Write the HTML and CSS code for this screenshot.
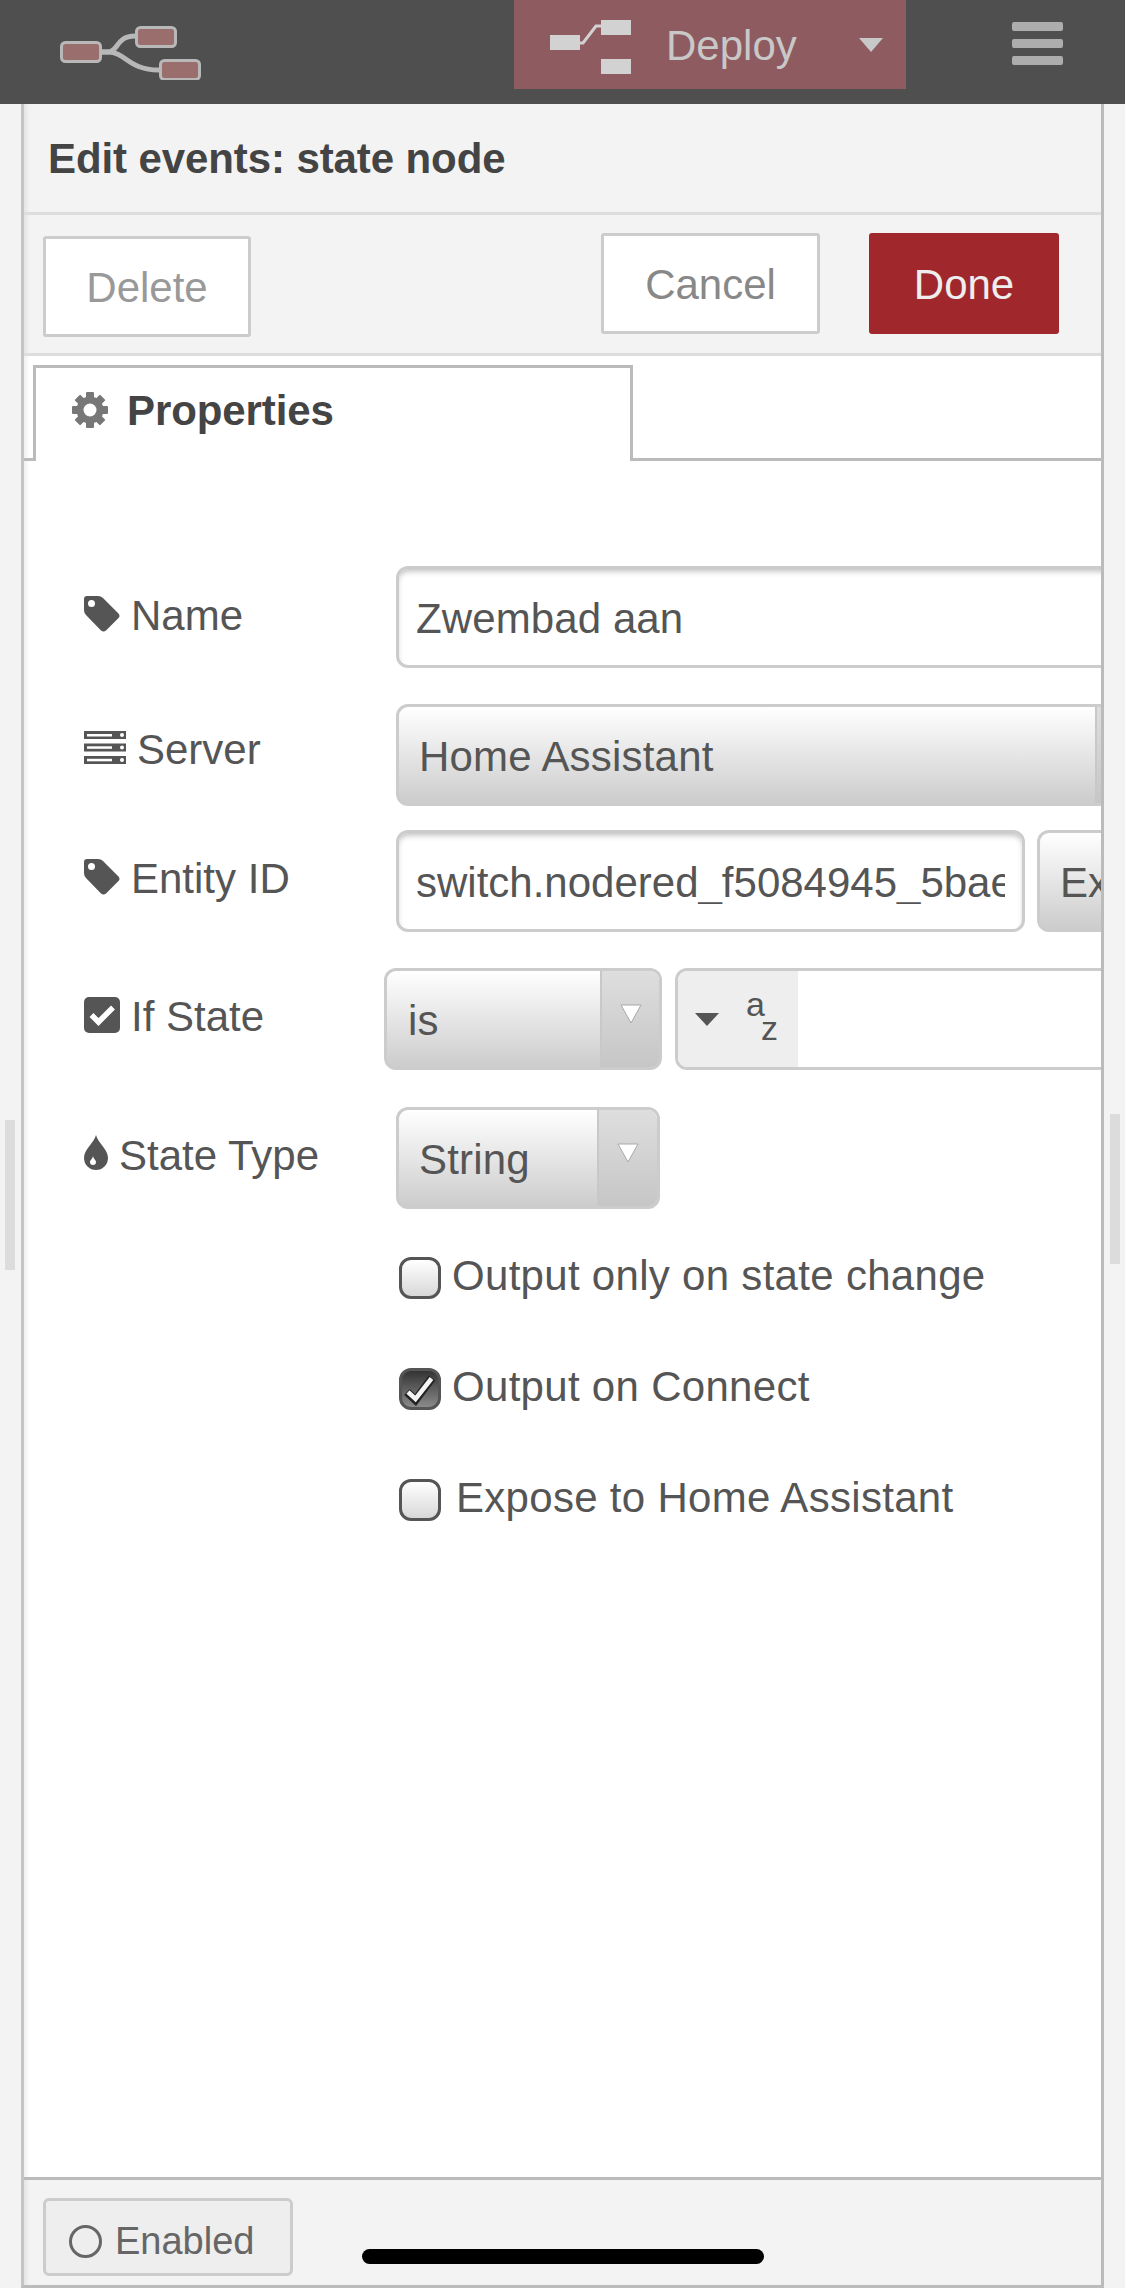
FILE: index.html
```html
<!DOCTYPE html>
<html lang="en">
<head>
    <meta charset="UTF-8">
    <meta name="viewport" content="width=device-width, initial-scale=1.0">
    <title>Edit events: state node</title>
    <link rel="stylesheet" href="styles.css">
</head>
<body>
    <header class="topbar">
        <svg class="logo" width="141" height="54" viewBox="0 0 141 54">
            <path d="M42 26 H48 C58 26 56 10 75 10" fill="none" stroke="#b8b8b8" stroke-width="5"/>
            <path d="M42 26 H48 C66 26 68 44 99 44" fill="none" stroke="#b8b8b8" stroke-width="5"/>
            <rect x="1.5" y="16.5" width="39" height="19" rx="4" fill="#9b6e6e" stroke="#b8b8b8" stroke-width="3"/>
            <rect x="76.5" y="1.5" width="39" height="19" rx="4" fill="#9b6e6e" stroke="#b8b8b8" stroke-width="3"/>
            <rect x="100.5" y="34.5" width="39" height="19" rx="4" fill="#9b6e6e" stroke="#b8b8b8" stroke-width="3"/>
        </svg>
        <div class="deploy">
            <svg class="deploy-icon" width="81" height="54" viewBox="0 0 81 54">
                <rect x="0" y="15" width="30" height="15" fill="#d2d2d2"/>
                <rect x="51" y="0" width="30" height="15" fill="#d2d2d2"/>
                <rect x="51" y="39" width="30" height="15" fill="#d2d2d2"/>
                <path d="M30 23 H33 L46 6 H51" fill="none" stroke="#d2d2d2" stroke-width="3"/>
            </svg>
            <span class="deploy-label">Deploy</span>
            <svg class="deploy-caret" width="24" height="14" viewBox="0 0 24 14">
                <path d="M0 0 H24 L12 14 Z" fill="#c8c8c8"/>
            </svg>
        </div>
        <div class="menu">
            <span></span>
            <span></span>
            <span></span>
        </div>
    </header>

    <div class="handle handle-left"></div>
    <div class="handle handle-right"></div>

    <main class="tray">
        <div class="tray-title">Edit events: state node</div>

        <div class="toolbar">
            <div class="btn btn-delete">Delete</div>
            <div class="btn btn-cancel">Cancel</div>
            <div class="btn btn-done">Done</div>
        </div>

        <div class="tabs">
            <div class="tab">
                <svg width="36" height="36" viewBox="0 0 36 36">
                    <g fill="#777">
                        <rect x="14" y="0" width="8" height="36" rx="1"/>
                        <rect x="14" y="0" width="8" height="36" rx="1" transform="rotate(45 18 18)"/>
                        <rect x="14" y="0" width="8" height="36" rx="1" transform="rotate(90 18 18)"/>
                        <rect x="14" y="0" width="8" height="36" rx="1" transform="rotate(135 18 18)"/>
                    </g>
                    <circle cx="18" cy="18" r="10" fill="none" stroke="#777" stroke-width="7"/>
                    <circle cx="18" cy="18" r="6.5" fill="#fff"/>
                </svg>
                <span>Properties</span>
            </div>
        </div>

        <div class="form">
            <div class="row row-name">
                <label class="label">
                    <svg class="tag" width="36" height="36" viewBox="0 0 36 36">
                        <path fill="#555" fill-rule="evenodd" d="M3 0 H14 Q17 0 19 2 L34.500 17.500 Q36.500 20 34.500 22 L22 34.500 Q19.500 36.500 17 34.500 L2 19 Q0 17 0 14 V3 Q0 0 3 0 Z M7.500 4 A3.500 3.500 0 1 0 7.500 11 A3.500 3.500 0 1 0 7.500 4 Z"/>
                    </svg>
                    Name
                </label>
                <div class="input input-wide">Zwembad aan</div>
            </div>

            <div class="row row-server">
                <label class="label">
                    <svg class="server" width="42" height="33" viewBox="0 0 42 33">
                        <path fill="#555" d="M0 0 H42 V8 H0 Z M0 12.500 H42 V20.500 H0 Z M0 25 H42 V33 H0 Z"/>
                        <g fill="#fff">
                            <rect x="3" y="3" width="25" height="2.500"/>
                            <rect x="3" y="15.300" width="25" height="2.500"/>
                            <rect x="3" y="27.800" width="25" height="2.500"/>
                            <circle cx="38" cy="4" r="2"/>
                            <circle cx="38" cy="16.500" r="2"/>
                            <circle cx="38" cy="29" r="2"/>
                        </g>
                    </svg>
                    Server
                </label>
                <div class="select select-server">
                    <div class="select-value">Home Assistant</div>
                    <div class="select-arrow"></div>
                </div>
            </div>

            <div class="row row-entity">
                <label class="label">
                    <svg class="tag" width="36" height="36" viewBox="0 0 36 36">
                        <path fill="#555" fill-rule="evenodd" d="M3 0 H14 Q17 0 19 2 L34.500 17.500 Q36.500 20 34.500 22 L22 34.500 Q19.500 36.500 17 34.500 L2 19 Q0 17 0 14 V3 Q0 0 3 0 Z M7.500 4 A3.500 3.500 0 1 0 7.500 11 A3.500 3.500 0 1 0 7.500 4 Z"/>
                    </svg>
                    Entity ID
                </label>
                <div class="input input-entity"><span class="input-clip">switch.nodered_f5084945_5bae4f</span></div>
                <div class="expand">Expand</div>
            </div>

            <div class="row row-if">
                <label class="label">
                    <svg class="tag" width="36" height="36" viewBox="0 0 36 36">
                        <rect width="36" height="36" rx="5" fill="#555"/>
                        <path d="M7.500 18 L14.500 25 L29 10.500" fill="none" stroke="#fff" stroke-width="5.500"/>
                    </svg>
                    If State
                </label>
                <div class="select select-is">
                    <div class="select-value">is</div>
                    <div class="select-arrow">
                        <svg width="22" height="20" viewBox="0 0 22 20"><path d="M1 1 H21 L11 19 Z" fill="#fff" stroke="#a8a8a8"/></svg>
                    </div>
                </div>
                <div class="typed">
                    <div class="typed-btn">
                        <svg width="24" height="13" viewBox="0 0 24 13"><path d="M0 0 H24 L12 13 Z" fill="#555"/></svg>
                        <span class="type-a">a</span>
                        <span class="type-z">z</span>
                    </div>
                </div>
            </div>

            <div class="row row-type">
                <label class="label">
                    <svg class="drop" width="24" height="35" viewBox="0 0 24 35">
                        <path fill="#555" fill-rule="evenodd" d="M12 0 C14 8 24 14 24 23 A12 12 0 0 1 0 23 C0 14 10 8 12 0 Z M9 21 C8.500 24 6 25 6 27 A3 3 0 0 0 12 27 C12 25 9.500 24 9 21 Z"/>
                    </svg>
                    State Type
                </label>
                <div class="select select-string">
                    <div class="select-value">String</div>
                    <div class="select-arrow">
                        <svg width="22" height="20" viewBox="0 0 22 20"><path d="M1 1 H21 L11 19 Z" fill="#fff" stroke="#a8a8a8"/></svg>
                    </div>
                </div>
            </div>

            <div class="check-row check-first">
                <span class="check"></span>
                <span>Output only on state change</span>
            </div>
            <div class="check-row">
                <span class="check check-on">
                    <svg width="36" height="36" viewBox="0 0 36 36">
                        <path d="M5 21 L13.500 29 L30 7" fill="none" stroke="#222" stroke-width="8"/>
                        <path d="M6 21 L13.500 28 L29.500 7.500" fill="none" stroke="#f4f4f4" stroke-width="4.500"/>
                    </svg>
                </span>
                <span>Output on Connect</span>
            </div>
            <div class="check-row check-expose">
                <span class="check"></span>
                <span>Expose to Home Assistant</span>
            </div>
        </div>

        <footer class="tray-footer">
            <div class="enabled">
                <span class="enabled-dot"></span>
                Enabled
            </div>
        </footer>
    </main>

    <div class="home-bar"></div>
</body>
</html>
```

FILE: styles.css
```css
* {
    box-sizing: border-box;
}
html, body {
    height: 100%;
}
body {
    margin: 0;
    background-color: #f3f3f3;
    font-family: "Liberation Sans", Arial, sans-serif;
    font-size: 42px;
    line-height: 42px;
    color: #555;
    display: flex;
    flex-direction: column;
    overflow: hidden;
}

/* top bar */
.topbar {
    flex: none;
    height: 104px;
    background-color: #4f4f4f;
    display: flex;
    align-items: flex-start;
    padding: 0 62px 0 60px;
}
.logo {
    margin-top: 26px;
}
.deploy {
    margin-left: auto;
    margin-right: 106px;
    width: 392px;
    height: 89px;
    background-color: #8e5b60;
    padding-left: 36px;
    display: flex;
    align-items: flex-start;
    color: #c8c8c8;
}
.deploy-icon {
    margin-top: 20px;
}
.deploy-label {
    margin-left: 35px;
    margin-top: 25px;
}
.deploy-caret {
    margin-left: 62px;
    margin-top: 38px;
}
.menu {
    margin-top: 22px;
    width: 51px;
    display: flex;
    flex-direction: column;
    gap: 8px;
}
.menu span {
    height: 9px;
    border-radius: 2px;
    background-color: #adadad;
}

/* resize handles on both sides of the tray */
.handle {
    position: absolute;
    width: 10px;
    height: 150px;
    background-color: #dcdcdc;
}
.handle-left {
    left: 5px;
    top: 1120px;
}
.handle-right {
    left: 1110px;
    top: 1114px;
}

/* tray */
.tray {
    flex: 1;
    min-height: 0;
    margin: 0 21px;
    border-left: 3px solid #c4c4c4;
    border-right: 3px solid #bbb;
    border-bottom: 3px solid #bbb;
    display: flex;
    flex-direction: column;
    overflow: hidden;
}
.tray-title,
.toolbar,
.tabs,
.form,
.tray-footer {
    box-shadow: inset 5px 0 5px -3px rgba(0, 0, 0, 0.08);
}
.tray-title {
    flex: none;
    height: 111px;
    border-bottom: 3px solid #ddd;
    padding: 34px 0 0 24px;
    font-weight: bold;
    letter-spacing: -0.1px;
    color: #444;
}
.toolbar {
    flex: none;
    height: 141px;
    border-bottom: 3px solid #ddd;
    padding: 18px 42px 0 19px;
    display: flex;
    align-items: flex-start;
}
.btn {
    height: 101px;
    border: 3px solid #ccc;
    border-radius: 3px;
    background-color: #fff;
    color: #888;
    padding-top: 3px;
    display: flex;
    align-items: center;
    justify-content: center;
}
.btn-delete {
    width: 208px;
    margin-top: 3px;
    color: #999;
}
.btn-cancel {
    width: 219px;
    margin-left: auto;
}
.btn-done {
    width: 190px;
    margin-left: 49px;
    background-color: #a0272b;
    border-color: #a0272b;
    color: #eee;
}

/* tabs */
.tabs {
    flex: none;
    height: 105px;
    background-color: #fff;
    border-bottom: 3px solid #bbb;
    padding: 9px 0 0 9px;
}
.tab {
    width: 600px;
    height: 96px;
    background-color: #fff;
    border: 3px solid #bbb;
    border-bottom: none;
    padding: 24px 0 0 36px;
    display: flex;
    align-items: flex-start;
    gap: 19px;
    font-weight: bold;
    letter-spacing: -0.1px;
    color: #444;
}
.tab span {
    margin-top: -2px;
}

/* form */
.form {
    flex: 1;
    min-height: 0;
    background-color: #fff;
    padding: 105px 0 0 60px;
    overflow: hidden;
}
.row {
    display: flex;
    align-items: flex-start;
    height: 102px;
}
.label {
    flex: none;
    width: 312px;
    display: flex;
    align-items: flex-start;
    gap: 11px;
    white-space: nowrap;
}
.row-server {
    margin-top: 36px;
}
.row-entity {
    margin-top: 24px;
}
.row-if {
    margin-top: 37px;
}
.row-type {
    margin-top: 36px;
}
.row-name .label {
    margin-top: 29px;
}
.row-server .label {
    margin-top: 25px;
}
.row-entity .label {
    margin-top: 28px;
}
.row-if .label {
    margin-top: 27px;
    width: 300px;
}
.row-type .label {
    margin-top: 28px;
}
.tag {
    flex: none;
    margin-top: 1px;
}
.server {
    flex: none;
    margin-top: 2px;
}
.drop {
    flex: none;
    margin-top: 0;
}

.input {
    flex: none;
    height: 102px;
    background-color: #fff;
    border: 3px solid #ccc;
    border-radius: 12px;
    box-shadow: inset 0 4px 6px -2px rgba(0, 0, 0, 0.28);
    padding: 3px 17px 0;
    display: flex;
    align-items: center;
    white-space: nowrap;
}
.input-wide {
    width: 800px;
    letter-spacing: 0.1px;
}
.input-entity {
    width: 629px;
}
.input-clip {
    display: block;
    overflow: hidden;
}
.expand {
    flex: none;
    width: 300px;
    height: 102px;
    margin-left: 12px;
    border: 3px solid #ccc;
    border-radius: 12px;
    background: linear-gradient(#fff, #ccc);
    padding: 3px 0 0 20px;
    display: flex;
    align-items: center;
}

.select {
    flex: none;
    height: 102px;
    border: 3px solid #ccc;
    border-radius: 12px;
    background: linear-gradient(#fff, #ccc);
    display: flex;
    overflow: hidden;
}
.select-value {
    padding: 3px 0 0 20px;
    letter-spacing: 0.2px;
    display: flex;
    align-items: center;
}
.select-arrow {
    border-left: 2px solid #c8c8c8;
    background: linear-gradient(#dedede, #c6c6c6);
    padding-top: 33px;
    display: flex;
    justify-content: center;
    align-items: flex-start;
}
.select-server {
    width: 800px;
}
.select-server .select-value {
    width: 696px;
}
.select-server .select-arrow {
    flex: 1;
}
.select-is {
    width: 278px;
    margin-top: -1px;
}
.select-is .select-value {
    width: 213px;
    padding-left: 21px;
}
.select-is .select-arrow {
    flex: 1;
}
.select-string {
    width: 264px;
}
.select-string .select-value {
    width: 198px;
}
.select-string .select-arrow {
    flex: 1;
}

.typed {
    flex: none;
    width: 500px;
    height: 102px;
    margin-left: 13px;
    margin-top: -1px;
    border: 3px solid #ccc;
    border-radius: 12px;
    background-color: #fff;
    overflow: hidden;
}
.typed-btn {
    position: relative;
    width: 120px;
    height: 100%;
    background-color: #eee;
    padding: 42px 0 0 17px;
}
.typed-btn svg {
    display: block;
}
.type-a,
.type-z {
    position: absolute;
    font-size: 34px;
    line-height: 34px;
    color: #555;
}
.type-a {
    left: 68px;
    top: 16px;
}
.type-z {
    left: 83px;
    top: 40px;
}

/* checkboxes */
.check-row {
    display: flex;
    align-items: flex-start;
    gap: 11px;
    height: 42px;
    margin: 69px 0 0 315px;
    white-space: nowrap;
    letter-spacing: 0.3px;
}
.check-row > span:last-child {
    margin-top: -2px;
}
.check-first {
    margin-top: 48px;
}
.check-expose {
    gap: 15px;
}
.check {
    flex: none;
    width: 42px;
    height: 42px;
    border: 3px solid #555;
    border-radius: 12px;
    background: linear-gradient(#fff, #d8d8d8);
}
.check-on {
    background: linear-gradient(#333, #8a8a8a);
}
.check-on svg {
    display: block;
}

/* footer */
.tray-footer {
    flex: none;
    height: 108px;
    border-top: 3px solid #bbb;
    padding: 18px 0 0 19px;
}
.enabled {
    width: 250px;
    height: 78px;
    border: 3px solid #ccc;
    border-radius: 6px;
    background-color: #eee;
    color: #666;
    font-size: 38px;
    padding: 8px 0 0 23px;
    display: flex;
    align-items: center;
    gap: 13px;
    white-space: nowrap;
}
.enabled-dot {
    flex: none;
    width: 33px;
    height: 33px;
    border: 3px solid #666;
    border-radius: 50%;
}

.home-bar {
    position: absolute;
    left: 362px;
    top: 2249px;
    width: 402px;
    height: 15px;
    border-radius: 8px;
    background-color: #000;
}
```
